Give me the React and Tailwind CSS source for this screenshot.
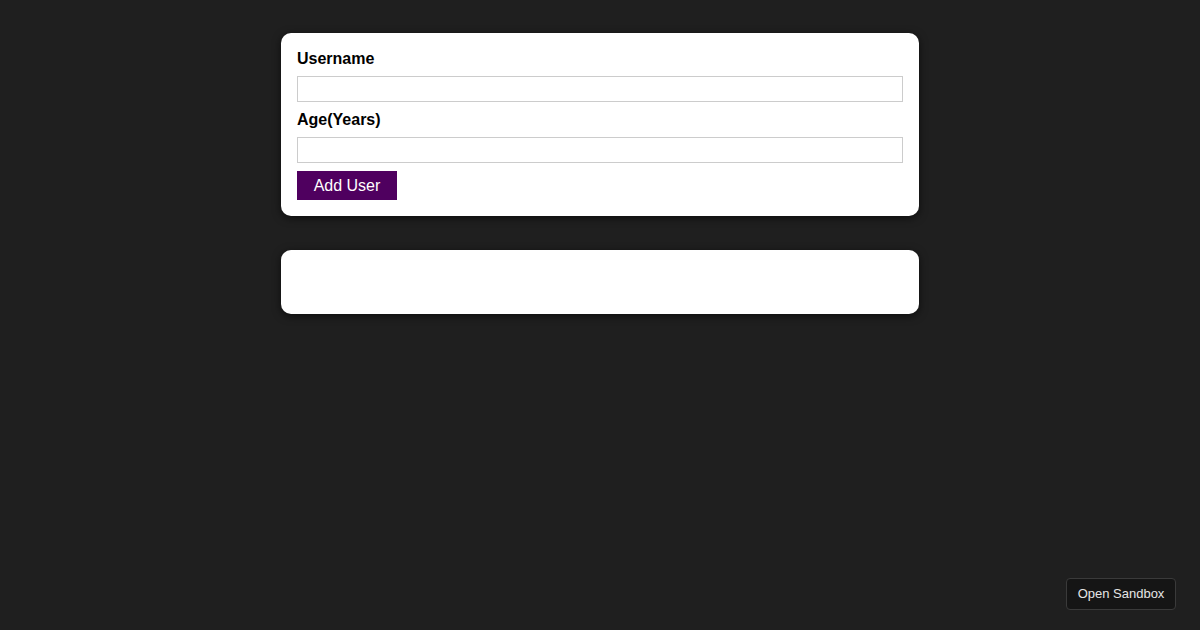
export default function App() {
  return (
    <div className="min-h-[630px] w-full bg-[#1f1f1f] pt-[33px] font-['Liberation_Sans',Arial,sans-serif] relative">
      <div className="mx-auto w-[638px] rounded-[10px] bg-white p-4 shadow-[0_2px_8px_rgba(0,0,0,0.6)]">
        <label className="mb-2 block text-base font-bold leading-[19px] text-black">Username</label>
        <input className="mb-2 block h-[26px] w-full border border-[#ccc] outline-none" type="text" />
        <label className="mb-2 block text-base font-bold leading-[19px] text-black">Age(Years)</label>
        <input className="mb-2 block h-[26px] w-full border border-[#ccc] outline-none" type="number" />
        <button className="block h-[29px] w-[100px] bg-[#4f005f] text-base leading-[normal] text-white">Add User</button>
      </div>
      <div className="mx-auto mt-[34px] h-[64px] w-[638px] rounded-[10px] bg-white shadow-[0_2px_8px_rgba(0,0,0,0.6)]"></div>
      <div className="absolute bottom-[20px] right-[24px] flex h-[32px] w-[110px] items-center justify-center rounded-[4px] border border-[#3a3a3a] bg-[#151515] text-[13px] text-[#e5e5e5]">
        Open Sandbox
      </div>
    </div>
  );
}
